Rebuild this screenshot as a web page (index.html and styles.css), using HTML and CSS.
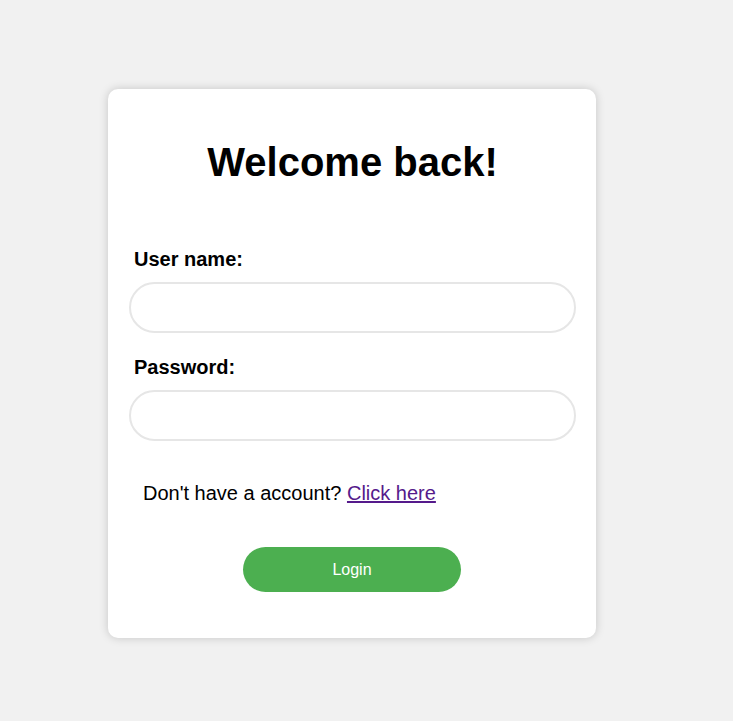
FILE: index.html
```html
<!DOCTYPE html>
<html>
<head>
<meta charset="utf-8">
<link rel="stylesheet" href="styles.css">
</head>
<body>
<div class="card">
  <h1 class="title">Welcome back!</h1>
  <form class="form">
    <label class="label">User name:</label>
    <input class="field" type="text">
    <label class="label label-next">Password:</label>
    <input class="field" type="password">
    <p class="signup">Don't have a account? <a class="link" href="#">Click here</a></p>
    <div class="actions"><button class="btn" type="button">Login</button></div>
  </form>
</div>
</body>
</html>
```
FILE: styles.css
```css
html, body { margin: 0; padding: 0; }
body {
  background: #f1f1f1;
  font-family: "Liberation Sans", Arial, sans-serif;
  width: 733px;
  height: 721px;
  overflow: hidden;
}
.card {
  box-sizing: border-box;
  margin: 89px 0 0 108px;
  width: 488px;
  height: 549px;
  background: #fff;
  border-radius: 10px;
  box-shadow: 0 0 10px rgba(0,0,0,0.18);
  padding: 50px 20px 0 21px;
}
.title {
  margin: 0;
  text-align: center;
  font-size: 40px;
  line-height: 46px;
  font-weight: bold;
  color: #000;
}
.form { display: flex; flex-direction: column; margin-top: 63px; }
.label {
  display: block;
  font-size: 20px;
  line-height: 23px;
  font-weight: bold;
  margin-left: 5px;
  color: #000;
}
.label-next { margin-top: 23px; }
.field {
  box-sizing: border-box;
  margin: 11px 0 0 0;
  width: 447px;
  height: 51px;
  border: 2px solid #e6e6e6;
  border-radius: 26px;
  background: #fff;
  outline: none;
  padding: 0 20px;
  font-family: inherit;
  font-size: 16px;
}
.signup {
  margin: 41px 0 0 14px;
  font-size: 20px;
  line-height: 23px;
  color: #000;
}
.link { color: #551a8b; text-decoration: underline; }
.actions { display: flex; justify-content: center; margin-top: 42px; padding-right: 1px; }
.btn {
  width: 218px;
  height: 45px;
  border: none;
  border-radius: 23px;
  background: #4caf50;
  color: #fff;
  font-family: inherit;
  font-size: 16px;
  cursor: pointer;
}
```
